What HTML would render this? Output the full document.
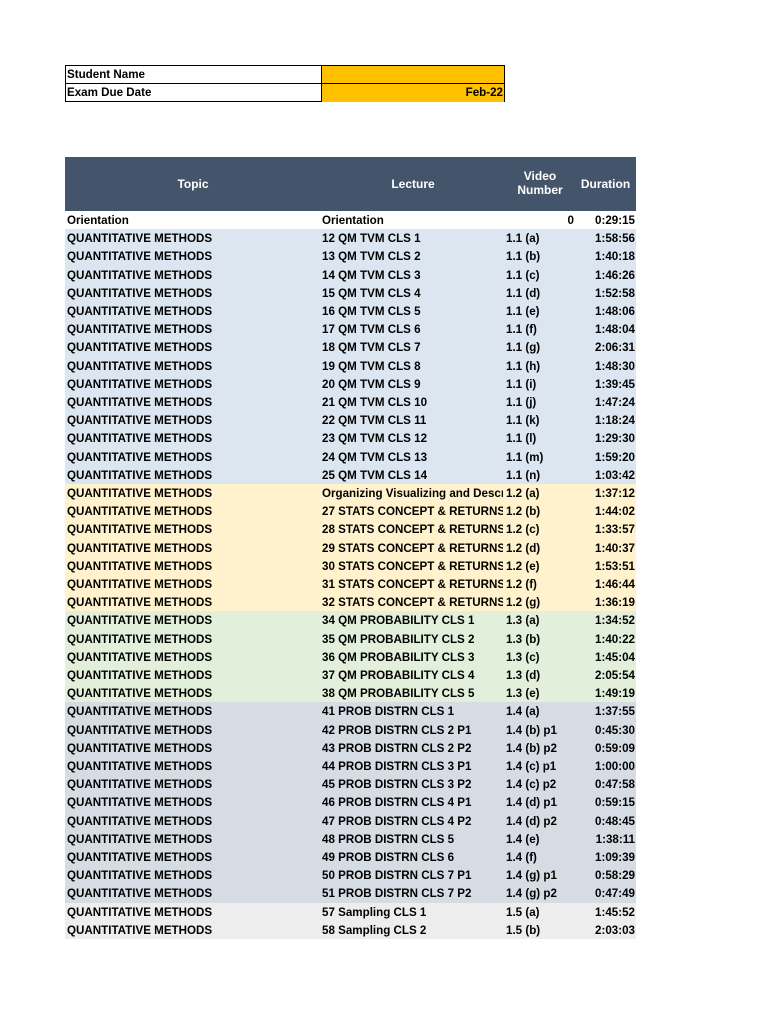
<!DOCTYPE html>
<html><head><meta charset="utf-8"><style>
body{margin:0;width:768px;height:1024px;background:#fff;font-family:"Liberation Sans",sans-serif;font-weight:bold;font-size:11.6px;color:#000;position:relative;overflow:hidden}
.top{position:absolute;left:65px;top:65px;width:440px;height:37px;border:1px solid #000;box-sizing:border-box}
.top div{position:absolute;height:18px;line-height:18px;box-sizing:border-box}
.hd{position:absolute;left:65px;top:157px;width:571px;height:54px;background:#44546a;color:#fff;font-size:12px}
.hd span{position:absolute;text-align:center;line-height:14px}
.r{position:absolute;left:65px;width:571px;height:18.2px;line-height:19px;white-space:nowrap}
.r span{position:absolute;top:0;overflow:hidden}
.a{left:2px;width:250px}.b{left:257px;width:181px}.c{left:441px;width:70px}.d{left:511px;width:59px;text-align:right}
.B{background:#dce6f1}.Y{background:#fff2cc}.G{background:#e2efda}.S{background:#d6dce4}.E{background:#ededed}
</style></head><body>
<div class="top">
<div style="left:0;top:0;width:256px;border-bottom:1px solid #000;border-right:1px solid #000;padding-left:1px">Student Name</div>
<div style="left:256px;top:0;width:182px;background:#ffc000;border-bottom:1px solid #000"></div>
<div style="left:0;top:18px;width:256px;border-right:1px solid #000;padding-left:1px">Exam Due Date</div>
<div style="left:256px;top:18px;width:182px;background:#ffc000;text-align:right;padding-right:1px">Feb-22</div>
</div>
<div class="hd">
<span style="left:0;width:256px;top:20px">Topic</span>
<span style="left:256px;width:184px;top:20px">Lecture</span>
<span style="left:440px;width:70px;top:12px">Video<br>Number</span>
<span style="left:510px;width:61px;top:20px">Duration</span>
</div>
<div class="r" style="top:211px"><span class="a">Orientation</span><span class="b">Orientation</span><span class="c" style="text-align:right;width:68px">0</span><span class="d">0:29:15</span></div>
<div class="r B" style="top:229.2px"><span class="a">QUANTITATIVE METHODS</span><span class="b">12 QM TVM CLS 1</span><span class="c">1.1 (a)</span><span class="d">1:58:56</span></div>
<div class="r B" style="top:247.4px"><span class="a">QUANTITATIVE METHODS</span><span class="b">13 QM TVM CLS 2</span><span class="c">1.1 (b)</span><span class="d">1:40:18</span></div>
<div class="r B" style="top:265.6px"><span class="a">QUANTITATIVE METHODS</span><span class="b">14 QM TVM CLS 3</span><span class="c">1.1 (c)</span><span class="d">1:46:26</span></div>
<div class="r B" style="top:283.8px"><span class="a">QUANTITATIVE METHODS</span><span class="b">15 QM TVM CLS 4</span><span class="c">1.1 (d)</span><span class="d">1:52:58</span></div>
<div class="r B" style="top:302px"><span class="a">QUANTITATIVE METHODS</span><span class="b">16 QM TVM CLS 5</span><span class="c">1.1 (e)</span><span class="d">1:48:06</span></div>
<div class="r B" style="top:320.2px"><span class="a">QUANTITATIVE METHODS</span><span class="b">17 QM TVM CLS 6</span><span class="c">1.1 (f)</span><span class="d">1:48:04</span></div>
<div class="r B" style="top:338.4px"><span class="a">QUANTITATIVE METHODS</span><span class="b">18 QM TVM CLS 7</span><span class="c">1.1 (g)</span><span class="d">2:06:31</span></div>
<div class="r B" style="top:356.6px"><span class="a">QUANTITATIVE METHODS</span><span class="b">19 QM TVM CLS 8</span><span class="c">1.1 (h)</span><span class="d">1:48:30</span></div>
<div class="r B" style="top:374.8px"><span class="a">QUANTITATIVE METHODS</span><span class="b">20 QM TVM CLS 9</span><span class="c">1.1 (i)</span><span class="d">1:39:45</span></div>
<div class="r B" style="top:393px"><span class="a">QUANTITATIVE METHODS</span><span class="b">21 QM TVM CLS 10</span><span class="c">1.1 (j)</span><span class="d">1:47:24</span></div>
<div class="r B" style="top:411.2px"><span class="a">QUANTITATIVE METHODS</span><span class="b">22 QM TVM CLS 11</span><span class="c">1.1 (k)</span><span class="d">1:18:24</span></div>
<div class="r B" style="top:429.4px"><span class="a">QUANTITATIVE METHODS</span><span class="b">23 QM TVM CLS 12</span><span class="c">1.1 (l)</span><span class="d">1:29:30</span></div>
<div class="r B" style="top:447.6px"><span class="a">QUANTITATIVE METHODS</span><span class="b">24 QM TVM CLS 13</span><span class="c">1.1 (m)</span><span class="d">1:59:20</span></div>
<div class="r B" style="top:465.8px"><span class="a">QUANTITATIVE METHODS</span><span class="b">25 QM TVM CLS 14</span><span class="c">1.1 (n)</span><span class="d">1:03:42</span></div>
<div class="r Y" style="top:484px"><span class="a">QUANTITATIVE METHODS</span><span class="b">Organizing Visualizing and Describing</span><span class="c">1.2 (a)</span><span class="d">1:37:12</span></div>
<div class="r Y" style="top:502.2px"><span class="a">QUANTITATIVE METHODS</span><span class="b">27 STATS CONCEPT &amp; RETURNS</span><span class="c">1.2 (b)</span><span class="d">1:44:02</span></div>
<div class="r Y" style="top:520.4px"><span class="a">QUANTITATIVE METHODS</span><span class="b">28 STATS CONCEPT &amp; RETURNS</span><span class="c">1.2 (c)</span><span class="d">1:33:57</span></div>
<div class="r Y" style="top:538.6px"><span class="a">QUANTITATIVE METHODS</span><span class="b">29 STATS CONCEPT &amp; RETURNS</span><span class="c">1.2 (d)</span><span class="d">1:40:37</span></div>
<div class="r Y" style="top:556.8px"><span class="a">QUANTITATIVE METHODS</span><span class="b">30 STATS CONCEPT &amp; RETURNS</span><span class="c">1.2 (e)</span><span class="d">1:53:51</span></div>
<div class="r Y" style="top:575px"><span class="a">QUANTITATIVE METHODS</span><span class="b">31 STATS CONCEPT &amp; RETURNS</span><span class="c">1.2 (f)</span><span class="d">1:46:44</span></div>
<div class="r Y" style="top:593.2px"><span class="a">QUANTITATIVE METHODS</span><span class="b">32 STATS CONCEPT &amp; RETURNS</span><span class="c">1.2 (g)</span><span class="d">1:36:19</span></div>
<div class="r G" style="top:611.4px"><span class="a">QUANTITATIVE METHODS</span><span class="b">34 QM PROBABILITY CLS 1</span><span class="c">1.3 (a)</span><span class="d">1:34:52</span></div>
<div class="r G" style="top:629.6px"><span class="a">QUANTITATIVE METHODS</span><span class="b">35 QM PROBABILITY CLS 2</span><span class="c">1.3 (b)</span><span class="d">1:40:22</span></div>
<div class="r G" style="top:647.8px"><span class="a">QUANTITATIVE METHODS</span><span class="b">36 QM PROBABILITY CLS 3</span><span class="c">1.3 (c)</span><span class="d">1:45:04</span></div>
<div class="r G" style="top:666px"><span class="a">QUANTITATIVE METHODS</span><span class="b">37 QM PROBABILITY CLS 4</span><span class="c">1.3 (d)</span><span class="d">2:05:54</span></div>
<div class="r G" style="top:684.2px"><span class="a">QUANTITATIVE METHODS</span><span class="b">38 QM PROBABILITY CLS 5</span><span class="c">1.3 (e)</span><span class="d">1:49:19</span></div>
<div class="r S" style="top:702.4px"><span class="a">QUANTITATIVE METHODS</span><span class="b">41 PROB DISTRN CLS 1</span><span class="c">1.4 (a)</span><span class="d">1:37:55</span></div>
<div class="r S" style="top:720.6px"><span class="a">QUANTITATIVE METHODS</span><span class="b">42 PROB DISTRN CLS 2 P1</span><span class="c">1.4 (b) p1</span><span class="d">0:45:30</span></div>
<div class="r S" style="top:738.8px"><span class="a">QUANTITATIVE METHODS</span><span class="b">43 PROB DISTRN CLS 2 P2</span><span class="c">1.4 (b) p2</span><span class="d">0:59:09</span></div>
<div class="r S" style="top:757px"><span class="a">QUANTITATIVE METHODS</span><span class="b">44 PROB DISTRN CLS 3 P1</span><span class="c">1.4 (c) p1</span><span class="d">1:00:00</span></div>
<div class="r S" style="top:775.2px"><span class="a">QUANTITATIVE METHODS</span><span class="b">45 PROB DISTRN CLS 3 P2</span><span class="c">1.4 (c) p2</span><span class="d">0:47:58</span></div>
<div class="r S" style="top:793.4px"><span class="a">QUANTITATIVE METHODS</span><span class="b">46 PROB DISTRN CLS 4 P1</span><span class="c">1.4 (d) p1</span><span class="d">0:59:15</span></div>
<div class="r S" style="top:811.6px"><span class="a">QUANTITATIVE METHODS</span><span class="b">47 PROB DISTRN CLS 4 P2</span><span class="c">1.4 (d) p2</span><span class="d">0:48:45</span></div>
<div class="r S" style="top:829.8px"><span class="a">QUANTITATIVE METHODS</span><span class="b">48 PROB DISTRN CLS 5</span><span class="c">1.4 (e)</span><span class="d">1:38:11</span></div>
<div class="r S" style="top:848px"><span class="a">QUANTITATIVE METHODS</span><span class="b">49 PROB DISTRN CLS 6</span><span class="c">1.4 (f)</span><span class="d">1:09:39</span></div>
<div class="r S" style="top:866.2px"><span class="a">QUANTITATIVE METHODS</span><span class="b">50 PROB DISTRN CLS 7 P1</span><span class="c">1.4 (g) p1</span><span class="d">0:58:29</span></div>
<div class="r S" style="top:884.4px"><span class="a">QUANTITATIVE METHODS</span><span class="b">51 PROB DISTRN CLS 7 P2</span><span class="c">1.4 (g) p2</span><span class="d">0:47:49</span></div>
<div class="r E" style="top:902.6px"><span class="a">QUANTITATIVE METHODS</span><span class="b">57 Sampling CLS 1</span><span class="c">1.5 (a)</span><span class="d">1:45:52</span></div>
<div class="r E" style="top:920.8px"><span class="a">QUANTITATIVE METHODS</span><span class="b">58 Sampling CLS 2</span><span class="c">1.5 (b)</span><span class="d">2:03:03</span></div>
</body></html>
